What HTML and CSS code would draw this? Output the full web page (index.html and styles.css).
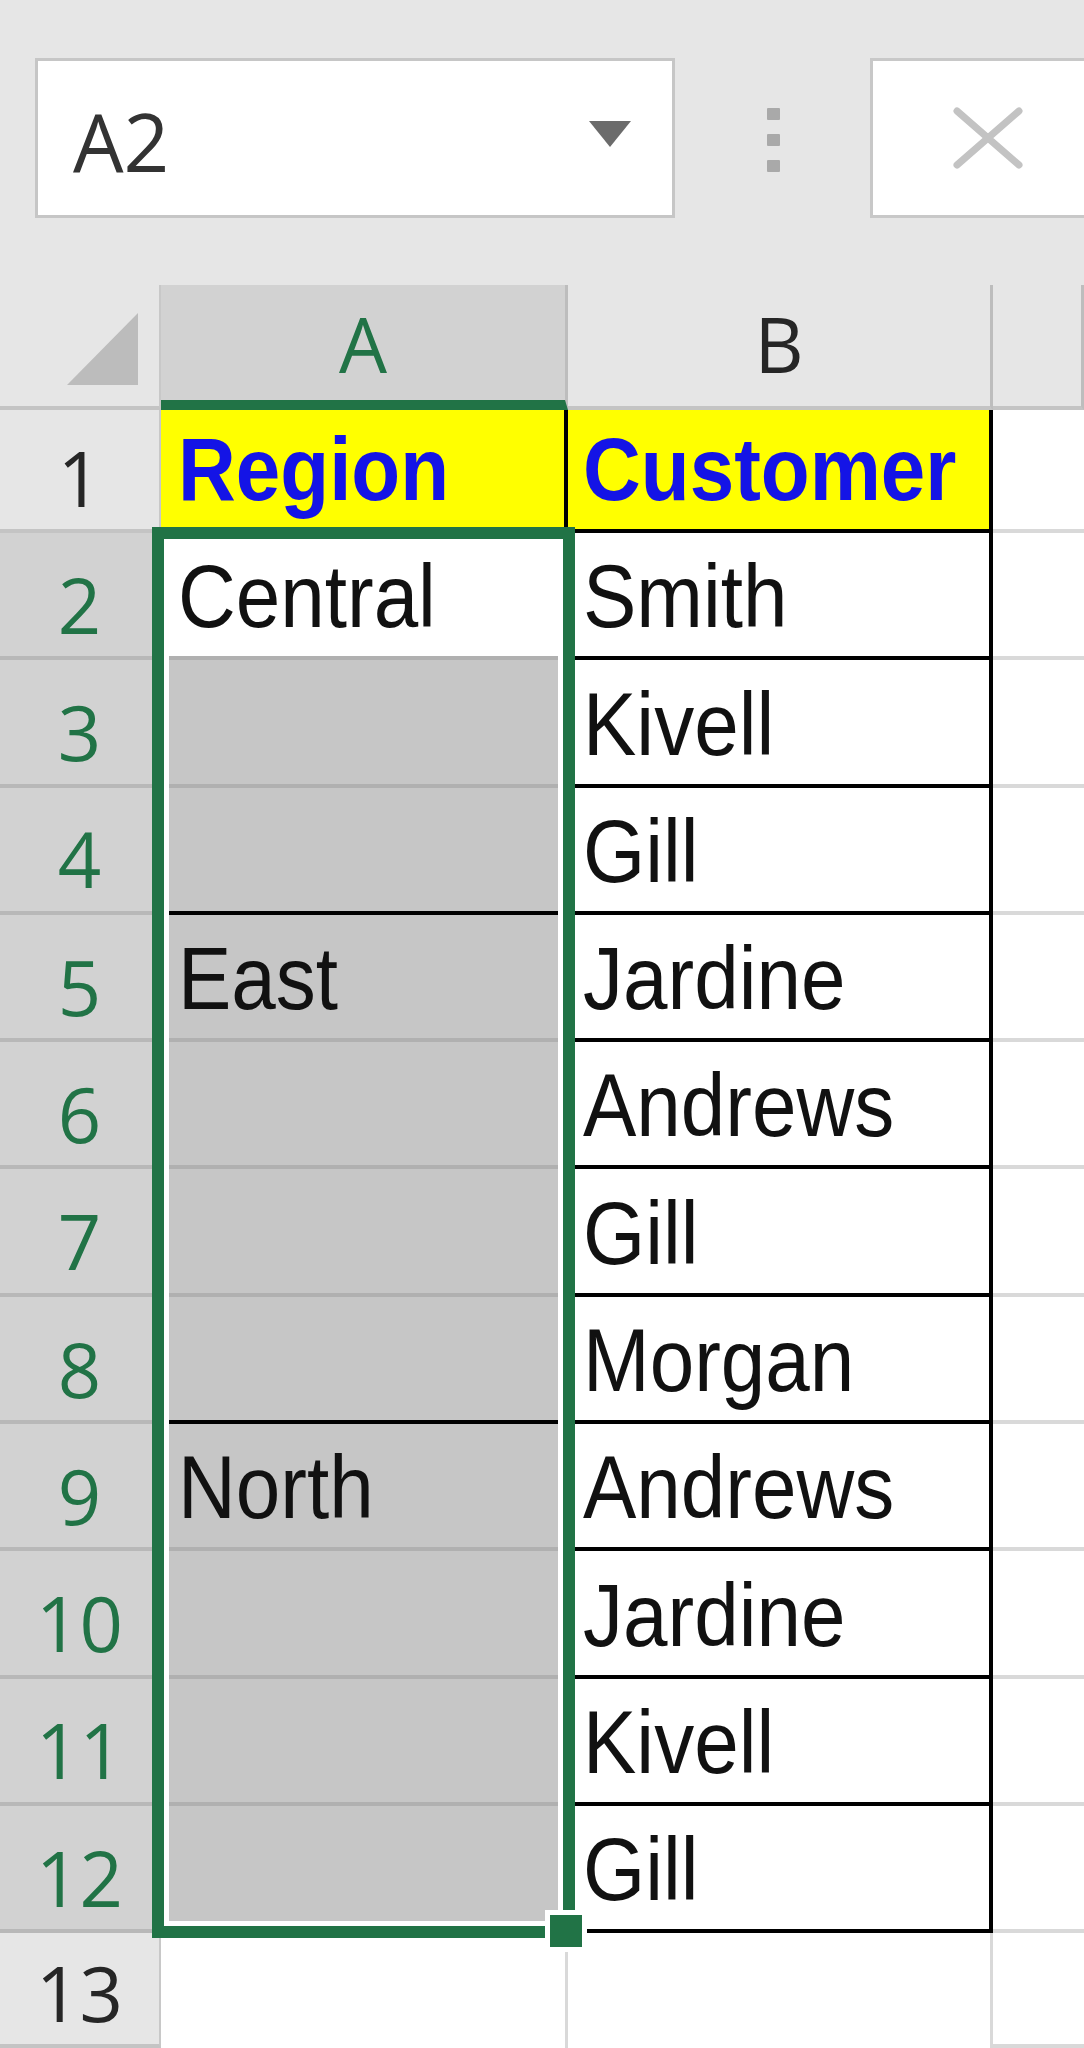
FILE: index.html
```html
<!DOCTYPE html>
<html>
<head>
<meta charset="utf-8">
<link rel="stylesheet" href="styles.css">
</head>
<body>
<div class="app">
  <div class="topbar">
    <div class="namebox">
      <span class="nb-text">A2</span>
      <svg class="nb-arrow" width="42" height="26" viewBox="0 0 42 26"><polygon points="0,0 42,0 21,26" fill="#6b6b6b"/></svg>
    </div>
    <div class="dots"><i></i><i></i><i></i></div>
    <div class="fxbox">
      <svg class="cancel" width="70" height="62" viewBox="0 0 70 62"><path d="M4 4 L66 58 M66 4 L4 58" stroke="#c3c3c3" stroke-width="7" stroke-linecap="round" fill="none"/></svg>
    </div>
  </div>
  <div class="sheet">
    <div class="corner"><svg class="tri" width="71" height="72" viewBox="0 0 71 72"><polygon points="71,0 71,72 0,72" fill="#bcbcbc"/></svg></div>
    <div class="ch ch-sel"><span class="hl">A</span></div>
    <div class="ch"><span class="hl">B</span></div>
    <div class="ch"></div>

    <div class="rh"><span class="hl">1</span></div>
    <div class="c ca a1 yel"><span class="t bold">Region</span></div>
    <div class="c cb yel"><span class="t bold">Customer</span></div>
    <div class="c cc"></div>

    <div class="rh sel"><span class="hl">2</span></div>
    <div class="c ca act"><span class="t">Central</span></div>
    <div class="c cb"><span class="t">Smith</span></div>
    <div class="c cc"></div>

    <div class="rh sel"><span class="hl">3</span></div>
    <div class="c ca g"></div>
    <div class="c cb"><span class="t">Kivell</span></div>
    <div class="c cc"></div>

    <div class="rh sel"><span class="hl">4</span></div>
    <div class="c ca g bk"></div>
    <div class="c cb"><span class="t">Gill</span></div>
    <div class="c cc"></div>

    <div class="rh sel"><span class="hl">5</span></div>
    <div class="c ca g"><span class="t">East</span></div>
    <div class="c cb"><span class="t">Jardine</span></div>
    <div class="c cc"></div>

    <div class="rh sel"><span class="hl">6</span></div>
    <div class="c ca g"></div>
    <div class="c cb"><span class="t">Andrews</span></div>
    <div class="c cc"></div>

    <div class="rh sel"><span class="hl">7</span></div>
    <div class="c ca g"></div>
    <div class="c cb"><span class="t">Gill</span></div>
    <div class="c cc"></div>

    <div class="rh sel"><span class="hl">8</span></div>
    <div class="c ca g bk"></div>
    <div class="c cb"><span class="t">Morgan</span></div>
    <div class="c cc"></div>

    <div class="rh sel"><span class="hl">9</span></div>
    <div class="c ca g"><span class="t">North</span></div>
    <div class="c cb"><span class="t">Andrews</span></div>
    <div class="c cc"></div>

    <div class="rh sel"><span class="hl">10</span></div>
    <div class="c ca g"></div>
    <div class="c cb"><span class="t">Jardine</span></div>
    <div class="c cc"></div>

    <div class="rh sel"><span class="hl">11</span></div>
    <div class="c ca g"></div>
    <div class="c cb"><span class="t">Kivell</span></div>
    <div class="c cc"></div>

    <div class="rh sel"><span class="hl">12</span></div>
    <div class="c ca g"></div>
    <div class="c cb"><span class="t">Gill</span></div>
    <div class="c cc"></div>

    <div class="rh"><span class="hl">13</span></div>
    <div class="c e13"></div>
    <div class="c e13"></div>
    <div class="c cc"></div>

    <div class="selection"></div>
    <div class="handle"></div>
  </div>
</div>
</body>
</html>
```
FILE: styles.css
```css
html, body {
  margin: 0;
  padding: 0;
  background: #e6e6e6;
}
.app {
  width: 1084px;
  height: 2048px;
  overflow: hidden;
  background: #e6e6e6;
}
.topbar {
  height: 285px;
  box-sizing: border-box;
  padding-top: 58px;
  display: flex;
  align-items: flex-start;
  overflow: hidden;
}
.namebox {
  margin-left: 35px;
  width: 640px;
  height: 160px;
  box-sizing: border-box;
  border: 3px solid #c6c6c6;
  background: #ffffff;
  display: flex;
  align-items: center;
  padding-left: 35px;
  flex-shrink: 0;
}
.nb-text {
  flex: 1;
  font-family: "Open Sans", "Noto Sans", sans-serif;
  font-size: 80px;
  line-height: 80px;
  padding-top: 6px;
  color: #333333;
}
.nb-arrow {
  margin-right: 41px;
  margin-bottom: 9px;
}
.dots {
  margin-left: 92px;
  margin-top: 50px;
  display: flex;
  flex-direction: column;
  gap: 14px;
  flex-shrink: 0;
}
.dots i {
  display: block;
  width: 13px;
  height: 12px;
  background: #a9a9a9;
  border-radius: 1px;
}
.fxbox {
  margin-left: 90px;
  width: 400px;
  height: 160px;
  box-sizing: border-box;
  border: 3px solid #c8c8c8;
  background: #ffffff;
  display: flex;
  align-items: center;
  padding-left: 80px;
  flex-shrink: 0;
}
.sheet {
  position: relative;
  display: grid;
  grid-template-columns: 161px 407px 425px 91px;
  grid-template-rows: 125px 123px repeat(11, 127.3px) 115px;
}
.sheet > div {
  box-sizing: border-box;
  overflow: hidden;
}
.corner {
  background: #e6e6e6;
  border-right: 2px solid #c8c8c8;
  border-bottom: 4px solid #c4c4c4;
  display: flex;
  justify-content: flex-end;
  align-items: flex-end;
  padding: 0 21px 21px 0;
}
.hl {
  display: inline-block;
  font-family: "Open Sans", "Noto Sans", sans-serif;
  font-size: 76px;
  line-height: 76px;
}
.ch {
  background: #e6e6e6;
  border-right: 3px solid #bdbdbd;
  border-bottom: 4px solid #c4c4c4;
  display: flex;
  justify-content: center;
  align-items: flex-end;
  padding-bottom: 24.5px;
  color: #262626;
}
.ch.ch-sel {
  background: #d2d2d2;
  border-bottom: 10px solid #217346;
  padding-bottom: 18.5px;
  color: #217346;
}
.rh {
  background: #e6e6e6;
  border-right: 2px solid #c8c8c8;
  border-bottom: 4px solid #c4c4c4;
  display: flex;
  justify-content: center;
  align-items: flex-end;
  padding-bottom: 13.5px;
  color: #262626;
}
.rh.sel {
  background: #d2d2d2;
  border-bottom-color: #b8b8b8;
  color: #217346;
}
.c {
  background: #ffffff;
  display: flex;
  align-items: flex-end;
  padding: 0 0 14px 15px;
  border-bottom: 4px solid #d9d9d9;
}
.ca {
  padding-left: 17px;
  border-bottom-color: #b0b0b0;
}
.a1 {
  border-right: 4px solid #000000;
  border-bottom-color: #000000;
}
.yel {
  background: #ffff00;
}
.g {
  background: #c6c6c6;
}
.g.bk {
  border-bottom-color: #000000;
}
.cb {
  border-right: 4px solid #000000;
  border-bottom: 4px solid #000000;
}
.cc {
  border-bottom-color: #d9d9d9;
}
.e13 {
  border-right: 3px solid #d9d9d9;
  border-bottom: none;
}
.t {
  display: inline-block;
  font-family: "Liberation Sans", Arial, sans-serif;
  font-size: 80px;
  line-height: 80px;
  color: #111111;
  transform: scaleY(1.12);
  transform-origin: 0 100%;
  white-space: nowrap;
}
.t.bold {
  font-weight: bold;
  color: #1414e6;
}
.selection {
  position: absolute;
  left: 152px;
  top: 242px;
  width: 423px;
  height: 1411px;
  box-sizing: border-box;
  border: 12px solid #217346;
  box-shadow: inset 0 0 0 5px #ffffff;
  pointer-events: none;
}
.handle {
  position: absolute;
  left: 545px;
  top: 1625px;
  width: 42px;
  height: 42px;
  box-sizing: border-box;
  border: 5px solid #ffffff;
  background: #217346;
}
```
